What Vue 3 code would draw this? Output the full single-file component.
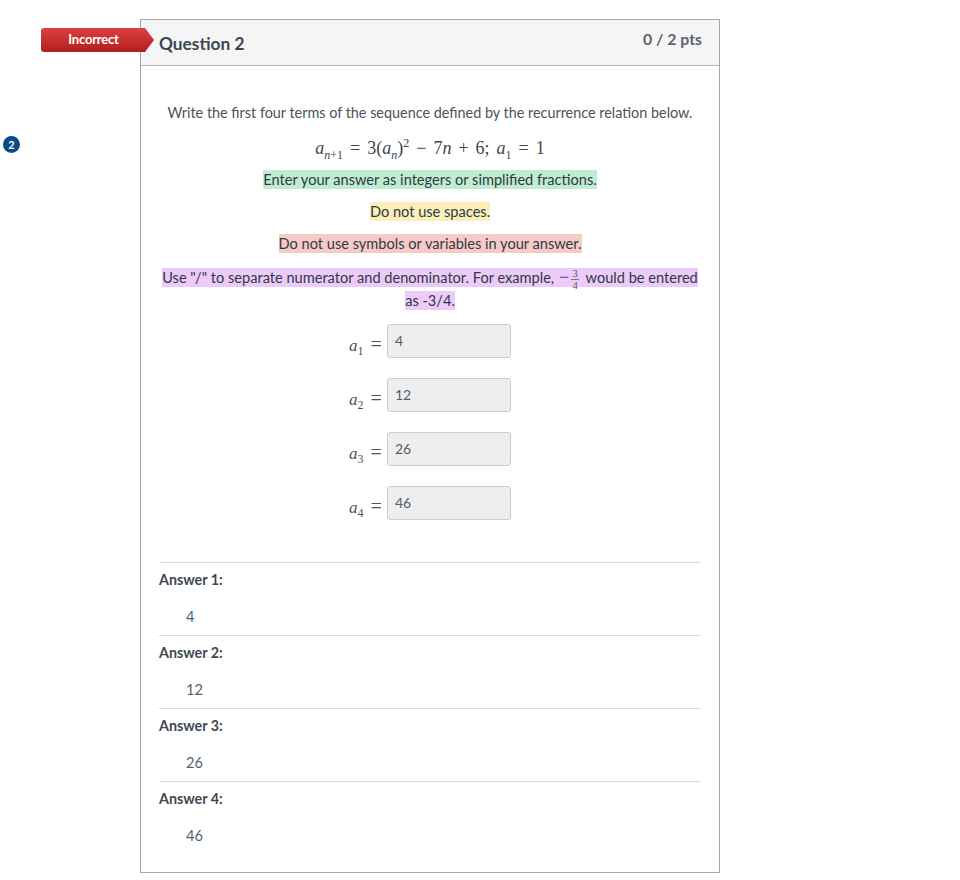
<script setup>
const answers = ['4', '12', '26', '46']
</script>

<template>
  <div class="page">
    <span class="pin">2</span>
    <section class="card">
      <div class="flag">Incorrect</div>
      <header class="head">
        <h2>Question 2</h2>
        <span class="pts">0 / 2 pts</span>
      </header>
      <div class="body">
        <p class="line intro">Write the first four terms of the sequence defined by the recurrence relation below.</p>
        <p class="line eq">
          <i>a</i><sub><i>n</i>+1</sub> = 3(<i>a</i><sub><i>n</i></sub>)<sup>2</sup> − 7<i>n</i> + 6; <i>a</i><sub>1</sub> = 1
        </p>
        <p class="line"><mark class="green">Enter your answer as integers or simplified fractions.</mark></p>
        <p class="line"><mark class="yellow">Do not use spaces.</mark></p>
        <p class="line"><mark class="red">Do not use symbols or variables in your answer.</mark></p>
        <p class="line use">
          <mark class="purple">Use "/" to separate numerator and denominator. For example, <span class="minus">−</span><span class="frac"><span>3</span><span class="den">4</span></span> would be entered as -3/4.</mark>
        </p>
        <div class="inputs">
          <div v-for="(a, i) in answers" :key="i" class="row">
            <span class="lbl"><span><i>a</i><sub>{{ i + 1 }}</sub></span><span class="eqs">=</span></span>
            <div class="box">{{ a }}</div>
          </div>
        </div>
        <div class="answers">
          <div v-for="(a, i) in answers" :key="i" class="ans">
            <div class="ans-title">Answer {{ i + 1 }}:</div>
            <div class="ans-val">{{ a }}</div>
          </div>
        </div>
      </div>
    </section>
  </div>
</template>

<style>
html, body { background: #fff; }
</style>

<style scoped>
.page {
  position: relative;
  width: 960px;
  height: 880px;
  padding: 19px 0 0 140px;
  box-sizing: border-box;
  font-family: Lato, "Open Sans", sans-serif;
  color: #2d3b45;
  overflow: hidden;
}
.pin {
  position: absolute;
  left: 3px;
  top: 136px;
  width: 17px;
  height: 17px;
  border-radius: 50%;
  background: #0b4a85;
  color: #fff;
  font-size: 11px;
  font-weight: 700;
  line-height: 17px;
  text-align: center;
}
.card {
  position: relative;
  width: 580px;
  height: 854px;
  box-sizing: border-box;
  border: 1px solid #a8a8a8;
}
.flag {
  position: absolute;
  left: -100px;
  top: 8px;
  width: 113px;
  height: 24px;
  background: linear-gradient(#dd4040, #b02020);
  clip-path: polygon(0 0, 104px 0, 100% 50%, 104px 100%, 0 100%);
  border-radius: 3px 0 0 3px;
  color: #fff;
  font-size: 13px;
  font-weight: 700;
  line-height: 22px;
  text-align: center;
  text-indent: -8px;
  letter-spacing: -0.2px;
}
.head {
  display: flex;
  justify-content: space-between;
  height: 46px;
  box-sizing: border-box;
  padding: 0 17px 0 18px;
  background: #f5f5f5;
  border-bottom: 1px solid #b5b5b5;
}
.head h2 {
  margin: 14px 0 0;
  font-size: 17.3px;
  font-weight: 700;
  line-height: 20px;
  color: #3b4650;
}
.pts {
  margin-top: 9px;
  font-size: 15.8px;
  font-weight: 700;
  line-height: 20px;
  color: #5a646c;
}
.body {
  padding: 0 18px;
}
.line {
  margin: 0;
  text-align: center;
  font-size: 14.6px;
  line-height: 22px;
  height: 32px;
}
.intro {
  margin-top: 36px;
  height: 23px;
  font-size: 14.4px;
  color: #4a545c;
}
.eq {
  margin-top: 11px;
  height: 33px;
  font-family: "Liberation Serif", serif;
  font-size: 18px;
  line-height: 24px;
  color: #3c464e;
  word-spacing: 2.5px;
}
.eq sub, .lbl sub {
  font-size: 12px;
  line-height: 0;
}
.eq sup {
  font-size: 12px;
  line-height: 0;
}
mark {
  color: #2f3a42;
  padding: 1px 0;
}
.green { background: #bfedd2; }
.yellow { background: #fbeeb8; }
.red { background: #f8cac6; }
.purple { background: #eccafa; }
.use {
  height: auto;
  line-height: 23px;
  padding: 1px 0 0;
}
.minus {
  font-family: "Liberation Serif", serif;
  font-size: 18px;
  line-height: 0;
  color: #555;
  margin: 0 2px 0 1px;
}
.frac {
  display: inline-flex;
  flex-direction: column;
  vertical-align: middle;
  width: 8px;
  margin: -8px 3px -8px 0;
  font-family: "Liberation Serif", serif;
  font-size: 10.5px;
  line-height: 11px;
  text-align: center;
  color: #555;
}
.den {
  border-top: 1px solid #777;
}
.inputs {
  margin-top: 12px;
  display: flex;
  flex-direction: column;
  gap: 20px;
}
.row {
  display: flex;
  align-items: center;
  margin-left: 190px;
}
.lbl {
  display: flex;
  align-items: baseline;
  width: 38px;
  height: 24px;
  padding-top: 4px;
  margin-bottom: -2px;
  font-family: "Liberation Serif", serif;
  font-size: 17px;
  line-height: 24px;
  color: #4a545c;
  white-space: nowrap;
}
.eqs {
  margin-left: 7px;
  font-size: 20px;
}
.box {
  width: 124px;
  height: 34px;
  box-sizing: border-box;
  padding: 7px 7px 5px;
  background: #eeeeee;
  border: 1px solid #c7cdd1;
  border-radius: 3px;
  font-size: 14px;
  line-height: 18px;
  color: #555f66;
}
.answers {
  margin-top: 42px;
}
.ans {
  height: 73px;
  box-sizing: border-box;
  border-top: 1px solid #dadada;
  padding-top: 8px;
}
.ans-title {
  font-size: 14.3px;
  font-weight: 700;
  line-height: 18px;
  color: #3f4a52;
}
.ans-val {
  margin: 19px 0 0 27px;
  font-size: 14.6px;
  line-height: 18px;
  color: #555f66;
}
</style>
